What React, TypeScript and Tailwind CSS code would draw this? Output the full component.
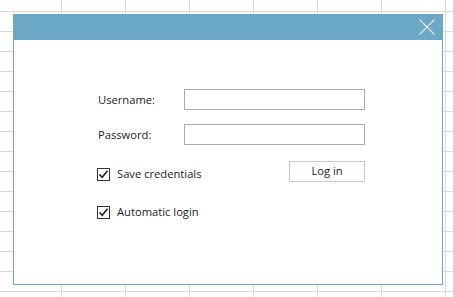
import React from 'react';

function CheckBox({ label }: { label: string }) {
  return (
    <label className="flex items-center h-[13px] gap-[7px] -ml-px">
      <span className="w-[13px] h-[13px] border border-[#333333] bg-white flex items-center justify-center">
        <svg width="11" height="11" viewBox="0 0 11 11">
          <path d="M1.5 5.5 L4.2 8.3 L9.5 1.8" fill="none" stroke="#222" strokeWidth="1.6" />
        </svg>
      </span>
      <span>{label}</span>
    </label>
  );
}

function Field({ label, type }: { label: string; type: string }) {
  return (
    <div className="flex items-center h-[21px]">
      <span className="w-[86px] pt-[1px]">{label}</span>
      <input
        type={type}
        className="w-[181px] h-[21px] border border-[#ababab] bg-white outline-none"
      />
    </div>
  );
}

export default function App() {
  return (
    <div
      className="w-[453px] h-[297px] overflow-hidden pt-[14px] pl-[13px] bg-white bg-[linear-gradient(to_right,#dadada_1px,transparent_1px),linear-gradient(to_bottom,#dadada_1px,transparent_1px)] bg-[size:64px_20px] bg-[position:61px_11px]"
      style={{ fontFamily: '"Open Sans", "Noto Sans", sans-serif' }}
    >
      <div className="w-[430px] h-[271px] border border-[#6aa8c6] bg-white text-[11.2px] text-[#1e1e1e]">
        <div className="h-[25px] bg-[#6aa8c6] flex justify-end items-start pt-[4px] pr-[7px]">
          <svg width="16" height="16" viewBox="0 0 16 16">
            <path d="M0.5 0.5 L15.5 15.5 M15.5 0.5 L0.5 15.5" stroke="#e4eef3" strokeWidth="1.2" />
          </svg>
        </div>
        <div className="pl-[84px] pt-[49px] w-[352px]">
          <Field label="Username:" type="text" />
          <div className="mt-[14px]">
            <Field label="Password:" type="password" />
          </div>
          <div className="mt-[16px] flex items-start justify-between">
            <div className="mt-[7px]">
              <CheckBox label="Save credentials" />
            </div>
            <button className="w-[76px] h-[21px] border border-[#cccccc] bg-[#fdfdfd] mr-px">
              Log in
            </button>
          </div>
          <div className="mt-[24px]">
            <CheckBox label="Automatic login" />
          </div>
        </div>
      </div>
    </div>
  );
}
